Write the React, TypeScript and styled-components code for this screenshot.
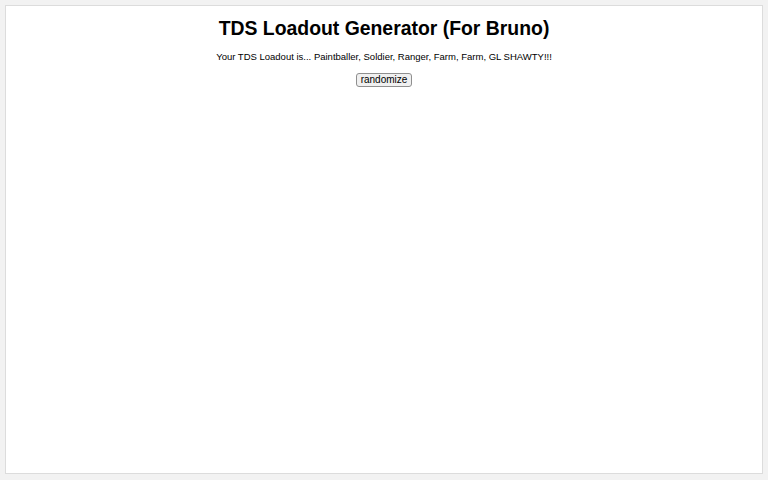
import React, { useState } from "react";
import styled, { createGlobalStyle } from "styled-components";

const towers = ["Paintballer", "Soldier", "Ranger", "Farm", "Scout", "Sniper", "Minigunner", "Demoman"];

const GlobalStyle = createGlobalStyle`
  html, body {
    margin: 0;
    padding: 0;
    background: #f2f2f2;
    font-family: "Liberation Sans", Arial, sans-serif;
  }
`;

const Page = styled.div`
  padding: 5px 5px 6px;
`;

const Panel = styled.main`
  box-sizing: border-box;
  height: 469px;
  background: #fff;
  border: 1px solid #dcdcdc;
  display: flex;
  flex-direction: column;
  align-items: center;
  padding-top: 10px;
`;

const Title = styled.h1`
  margin: 0;
  font-size: 19.4px;
  line-height: 24px;
  font-weight: 700;
  color: #000;
`;

const Result = styled.p`
  margin: 11px 0 0;
  font-size: 9.5px;
  line-height: 12px;
  color: #000;
`;

const Button = styled.button`
  margin-top: 10px;
  height: 14px;
  padding: 0 4px;
  font-family: "Liberation Sans", Arial, sans-serif;
  font-size: 10px;
  line-height: 12px;
  color: #000;
  background: #f0f0f0;
  border: 1px solid #8f8f8f;
  border-radius: 3px;
  cursor: pointer;
`;

function pick() {
  return Array.from({ length: 5 }, () => towers[Math.floor(Math.random() * towers.length)]);
}

export default function App() {
  const [loadout, setLoadout] = useState(["Paintballer", "Soldier", "Ranger", "Farm", "Farm"]);

  return (
    <>
      <GlobalStyle />
      <Page>
        <Panel>
          <Title>TDS Loadout Generator (For Bruno)</Title>
          <Result>Your TDS Loadout is... {loadout.join(", ")}, GL SHAWTY!!!</Result>
          <Button onClick={() => setLoadout(pick())}>randomize</Button>
        </Panel>
      </Page>
    </>
  );
}
